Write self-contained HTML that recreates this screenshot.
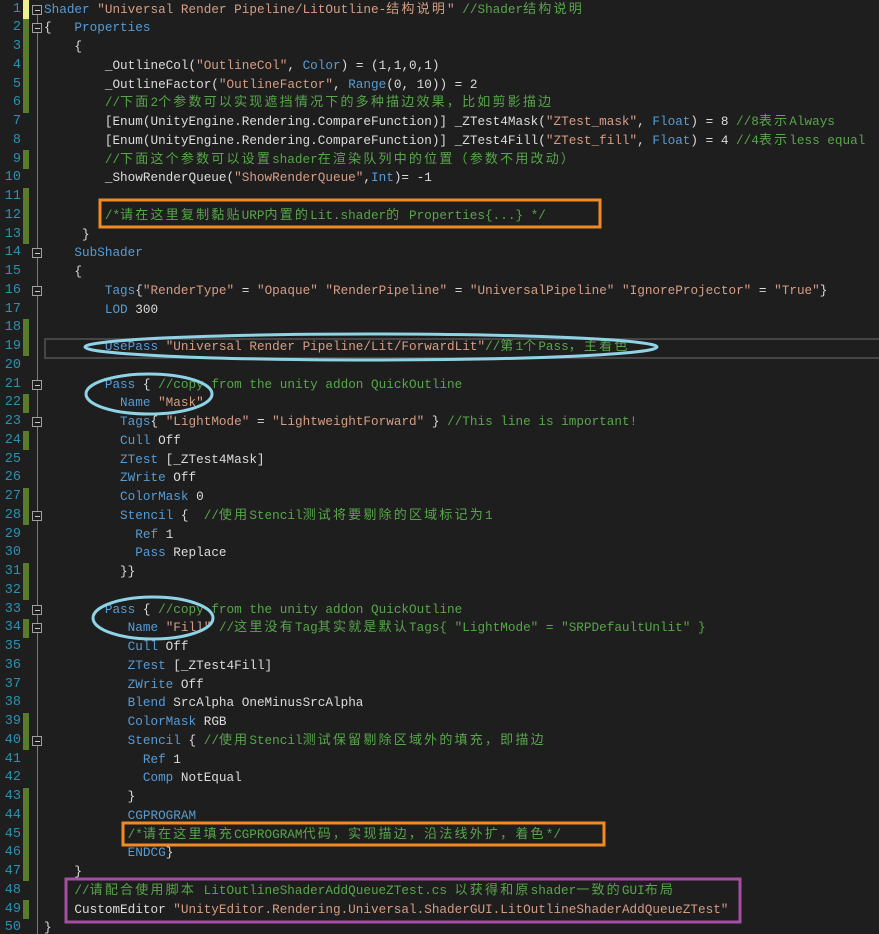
<!DOCTYPE html>
<html><head><meta charset="utf-8"><style>
html,body{margin:0;padding:0;background:#1e1e1e;width:879px;height:934px;overflow:hidden}
body{position:relative;font-family:"Liberation Mono",monospace;font-size:12.68px;color:#dcdcdc}
.l{position:absolute;left:44px;height:19px;line-height:19px;white-space:pre}
.n{position:absolute;left:0;width:21px;text-align:right;color:#2b91af;height:19px;line-height:19px;font-size:13.5px}
.b{position:absolute;left:23px;width:6px;background:#587c2c}
.f{position:absolute;left:32px;width:8px;height:8px;border:1px solid #a0a0a0;background:#1e1e1e}
.f::after{content:"";position:absolute;left:2px;top:4px;width:5px;height:1px;background:#c8c8c8}
.k{color:#569cd6}.s{color:#d69d85}.c{color:#57a64a}
.z{font-family:"Noto Sans CJK SC",sans-serif;font-size:13px;letter-spacing:2.2px;line-height:1px}
</style></head><body>
<div style="position:absolute;left:37px;top:8px;width:1px;height:926px;background:#7a7a7a"></div>
<div style="position:absolute;left:44px;top:338px;width:835px;height:17px;border:2px solid #464646;border-right:none"></div>
<div id="g"></div>
<div id="c"></div>
<svg style="position:absolute;left:0;top:0" width="879" height="934">
<rect x="100" y="200" width="500" height="27" fill="none" stroke="#f08a24" stroke-width="3"/>
<ellipse cx="371" cy="347" rx="286" ry="13" fill="none" stroke="#8fd3e6" stroke-width="3"/>
<ellipse cx="149" cy="394" rx="63" ry="20" fill="none" stroke="#8fd3e6" stroke-width="3"/>
<ellipse cx="153" cy="618" rx="60" ry="21" fill="none" stroke="#8fd3e6" stroke-width="3"/>
<rect x="123" y="823" width="481" height="22" fill="none" stroke="#f08a24" stroke-width="3"/>
<rect x="66" y="879" width="674" height="43" fill="none" stroke="#a44ea4" stroke-width="3"/>
</svg>
<script>
const H=18.75;
const L=[
'<span class="k">Shader</span> <span class="s">"Universal Render Pipeline/LitOutline-<span class="z">结构说明</span>"</span> <span class="c">//Shader<span class="z">结构说明</span></span>',
'{   <span class="k">Properties</span>',
'    {',
'        _OutlineCol(<span class="s">"OutlineCol"</span>, <span class="k">Color</span>) = (1,1,0,1)',
'        _OutlineFactor(<span class="s">"OutlineFactor"</span>, <span class="k">Range</span>(0, 10)) = 2',
'        <span class="c">//<span class="z">下面</span>2<span class="z">个参数可以实现遮挡情况下的多种描边效果，比如剪影描边</span></span>',
'        [Enum(UnityEngine.Rendering.CompareFunction)] _ZTest4Mask(<span class="s">"ZTest_mask"</span>, <span class="k">Float</span>) = 8 <span class="c">//8<span class="z">表示</span>Always</span>',
'        [Enum(UnityEngine.Rendering.CompareFunction)] _ZTest4Fill(<span class="s">"ZTest_fill"</span>, <span class="k">Float</span>) = 4 <span class="c">//4<span class="z">表示</span>less equal</span>',
'        <span class="c">//<span class="z">下面这个参数可以设置</span>shader<span class="z">在渲染队列中的位置（参数不用改动）</span></span>',
'        _ShowRenderQueue(<span class="s">"ShowRenderQueue"</span>,<span class="k">Int</span>)= -1',
'',
'        <span class="c">/*<span class="z">请在这里复制黏贴</span>URP<span class="z">内置的</span>Lit.shader<span class="z">的</span> Properties{...} */</span>',
'     }',
'    <span class="k">SubShader</span>',
'    {',
'        <span class="k">Tags</span>{<span class="s">"RenderType"</span> = <span class="s">"Opaque"</span> <span class="s">"RenderPipeline"</span> = <span class="s">"UniversalPipeline"</span> <span class="s">"IgnoreProjector"</span> = <span class="s">"True"</span>}',
'        <span class="k">LOD</span> 300',
'',
'        <span class="k">UsePass</span> <span class="s">"Universal Render Pipeline/Lit/ForwardLit"</span><span class="c">//<span class="z">第</span>1<span class="z">个</span>Pass<span class="z">，主着色</span></span>',
'',
'        <span class="k">Pass</span> { <span class="c">//copy from the unity addon QuickOutline</span>',
'          <span class="k">Name</span> <span class="s">"Mask"</span>',
'          <span class="k">Tags</span>{ <span class="s">"LightMode"</span> = <span class="s">"LightweightForward"</span> } <span class="c">//This line is important!</span>',
'          <span class="k">Cull</span> Off',
'          <span class="k">ZTest</span> [_ZTest4Mask]',
'          <span class="k">ZWrite</span> Off',
'          <span class="k">ColorMask</span> 0',
'          <span class="k">Stencil</span> {  <span class="c">//<span class="z">使用</span>Stencil<span class="z">测试将要剔除的区域标记为</span>1</span>',
'            <span class="k">Ref</span> 1',
'            <span class="k">Pass</span> Replace',
'          }}',
'',
'        <span class="k">Pass</span> { <span class="c">//copy from the unity addon QuickOutline</span>',
'           <span class="k">Name</span> <span class="s">"Fill"</span> <span class="c">//<span class="z">这里没有</span>Tag<span class="z">其实就是默认</span>Tags{ "LightMode" = "SRPDefaultUnlit" }</span>',
'           <span class="k">Cull</span> Off',
'           <span class="k">ZTest</span> [_ZTest4Fill]',
'           <span class="k">ZWrite</span> Off',
'           <span class="k">Blend</span> SrcAlpha OneMinusSrcAlpha',
'           <span class="k">ColorMask</span> RGB',
'           <span class="k">Stencil</span> { <span class="c">//<span class="z">使用</span>Stencil<span class="z">测试保留剔除区域外的填充，即描边</span></span>',
'             <span class="k">Ref</span> 1',
'             <span class="k">Comp</span> NotEqual',
'           }',
'           <span class="k">CGPROGRAM</span>',
'           <span class="c">/*<span class="z">请在这里填充</span>CGPROGRAM<span class="z">代码，实现描边，沿法线外扩，着色</span>*/</span>',
'           <span class="k">ENDCG</span>}',
'    }',
'    <span class="c">//<span class="z">请配合使用脚本</span> LitOutlineShaderAddQueueZTest.cs <span class="z">以获得和原</span>shader<span class="z">一致的</span>GUI<span class="z">布局</span></span>',
'    CustomEditor <span class="s">"UnityEditor.Rendering.Universal.ShaderGUI.LitOutlineShaderAddQueueZTest"</span>',
'}'
];
let c='',g='';
const bars=[2,3,4,5,6,9,11,12,13,18,19,22,24,27,28,31,32,34,39,40,43,44,45,46,47,49];
const folds=[1,2,14,16,21,23,28,33,34,40];
L.forEach((t,i)=>{const y=(i*H-0.5).toFixed(2);c+=`<div class="l" style="top:${y}px">${t}</div>`;g+=`<div class="n" style="top:${y}px">${i+1}</div>`;});
bars.forEach(n=>{g+=`<div class="b" style="top:${((n-1)*H).toFixed(2)}px;height:18.75px"></div>`;});
g+=`<div class="b" style="top:0;height:18.75px;background:#efef8f"></div>`;
folds.forEach(n=>{g+=`<div class="f" style="top:${((n-1)*H+4.5).toFixed(2)}px"></div>`;});
document.getElementById('g').innerHTML=g;document.getElementById('c').innerHTML=c;
</script>
</body></html>
